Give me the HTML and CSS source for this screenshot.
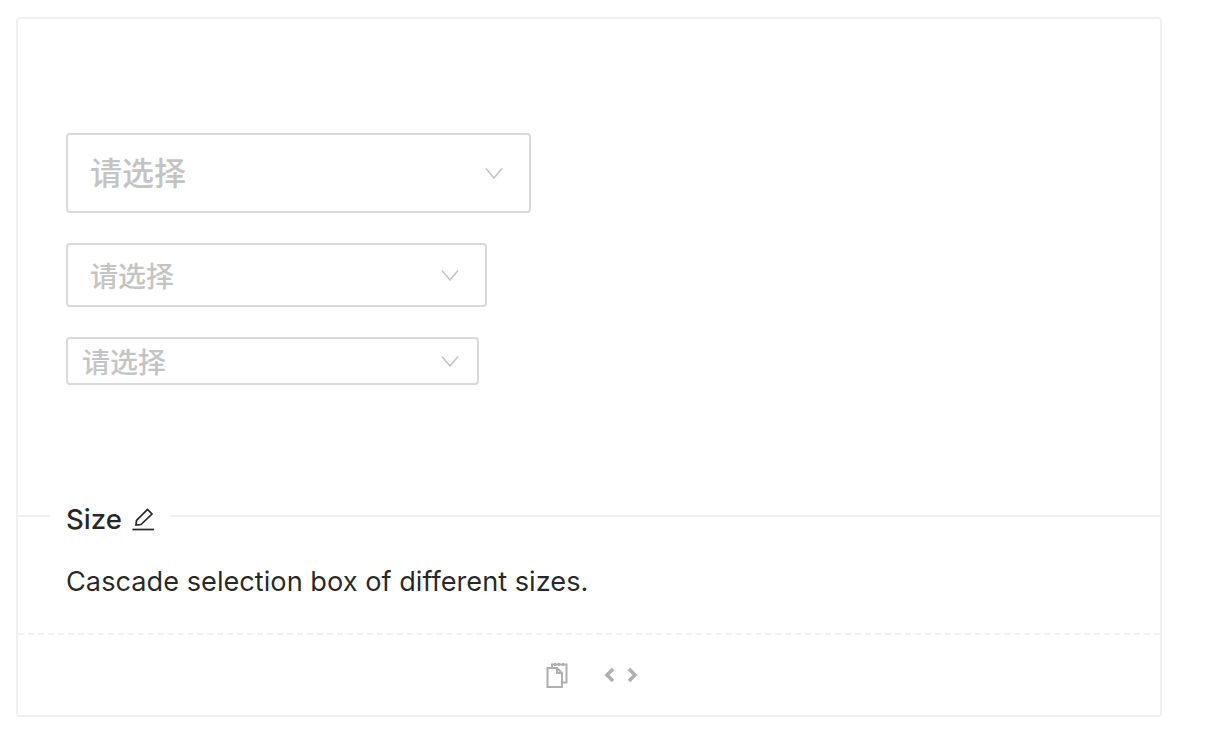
FILE: index.html
```html
<!DOCTYPE html>
<html lang="zh">
<head>
<meta charset="utf-8">
<title>Cascader Size</title>
<link rel="stylesheet" href="styles.css">
</head>
<body>
<section class="card">
  <div class="demo">
    <div class="select select-lg"><span class="placeholder">请选择</span>
      <svg class="chevron" width="18" height="12" viewBox="0 0 18 12"><path d="M1 1.500 9 11 17 1.500"/></svg>
    </div>
    <div class="select select-md"><span class="placeholder">请选择</span>
      <svg class="chevron" width="18" height="12" viewBox="0 0 18 12"><path d="M1 1.500 9 11 17 1.500"/></svg>
    </div>
    <div class="select select-sm"><span class="placeholder">请选择</span>
      <svg class="chevron" width="18" height="12" viewBox="0 0 18 12"><path d="M1 1.500 9 11 17 1.500"/></svg>
    </div>
  </div>
  <div class="meta">
    <div class="title-row">
      <span class="rule rule-short"></span>
      <h2 class="title">Size
        <svg class="edit" width="22" height="24" viewBox="0 0 22 24"><path d="M4 18 4.500 13.500 15.500 2.500 20 7 9 17.500Z"/><path class="edit-line" d="M0.500 22.500H22"/></svg>
      </h2>
      <span class="rule"></span>
    </div>
    <p class="desc">Cascade selection box of different sizes.</p>
  </div>
  <div class="actions">
    <svg class="copy" width="22" height="26" viewBox="0 0 22 26"><path d="M6 5V2.500h14.500v18H17"/><path d="M1.500 6H11l5 5v14H1.500Z"/><path d="M11 6v5h5"/><path d="M9 1v3M13 1v3M17 1v3"/></svg>
    <svg class="code" width="34" height="16" viewBox="0 0 34 16"><path d="M9 2 3 8 9 14"/><path d="M25 2 31 8 25 14"/></svg>
  </div>
</section>
</body>
</html>
```
FILE: styles.css
```css
* { box-sizing: border-box; }
html, body { margin: 0; background: #fff; }
body {
  padding: 17px 46px 34px 16px;
  font-family: Inter, "Noto Sans CJK SC", sans-serif;
  color: rgba(0, 0, 0, 0.85);
}
.card {
  height: 700px;
  border: 2px solid #f0f0f0;
  border-radius: 4px;
  display: flex;
  flex-direction: column;
}
.demo {
  height: 486px;
  padding: 114px 48px 0;
  display: flex;
  flex-direction: column;
  align-items: flex-start;
}
.select {
  border: 2px solid #d9d9d9;
  border-radius: 4px;
  display: flex;
  align-items: center;
  justify-content: space-between;
  color: #c4c4c4;
  font-family: "Noto Sans CJK SC", sans-serif;
  font-weight: 500;
}
.select-lg { width: 465px; height: 80px; padding: 0 26px 0 22px; font-size: 32px; margin-bottom: 30px; }
.select-lg .placeholder { margin-bottom: 4px; }
.select-md { width: 421px; height: 64px; padding: 0 26px 0 22px; font-size: 28px; margin-bottom: 30px; }
.select-sm { width: 413px; height: 48px; padding: 0 18px 0 14px; font-size: 28px; }
.chevron { fill: none; stroke: #c4c4c4; stroke-width: 1.500; }
.meta { height: 128px; }
.title-row { display: flex; align-items: center; height: 32px; margin-top: -2px; }
.rule { flex: 1; height: 2px; background: #f0f0f0; margin-top: -7px; }
.rule-short { flex: 0 0 32px; }
.title {
  margin: 0;
  padding: 0 16px;
  display: flex;
  align-items: center;
  gap: 10px;
  font-size: 27.600px;
  font-weight: 500;
  line-height: 32px;
}
.edit { fill: none; stroke: rgba(0, 0, 0, 0.85); stroke-width: 1.700; }
.desc { margin: 27px 0 0 48px; font-size: 27.200px; line-height: 40px; }
.actions {
  flex: 1;
  border-top: 2px dashed #f0f0f0;
  display: flex;
  align-items: center;
  justify-content: center;
  gap: 37px;
  padding-left: 6px;
}
.copy { fill: none; stroke: #b0b0b0; stroke-width: 2; }
.code { fill: none; stroke: #b0b0b0; stroke-width: 3.500; margin-left: -1px; }
```
